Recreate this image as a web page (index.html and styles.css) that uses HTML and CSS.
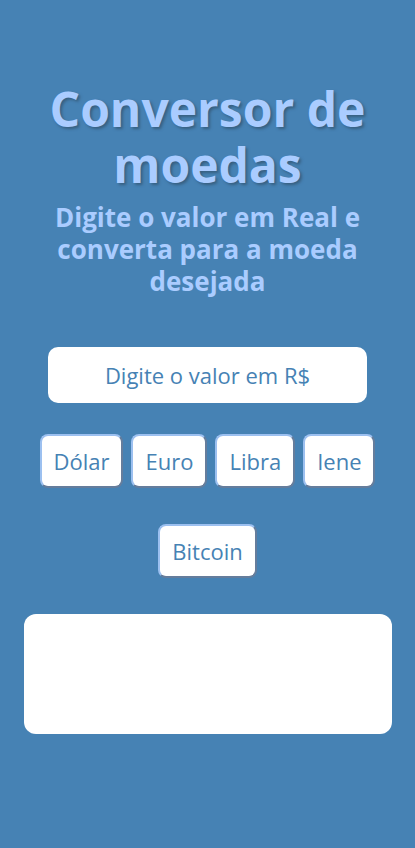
FILE: index.html
```html
<!DOCTYPE html>
<html>
<head>
  <title>Conversor de moedas</title>
  <link rel="stylesheet" href="styles.css">
</head>
<body>

<div class="app">
  <h1 class="title">Conversor de moedas</h1>
  <h2 class="subtitle">Digite o valor em Real e converta para a moeda desejada</h2>

  <input type="text" class="valor" placeholder="Digite o valor em R$" />

  <div class="moedas">
    <button class="moeda">Dólar</button>
    <button class="moeda">Euro</button>
    <button class="moeda">Libra</button>
    <button class="moeda">Iene</button>
    <button class="moeda">Bitcoin</button>
  </div>

  <div class="resultado"></div>
</div>

</body>
</html>
```

FILE: styles.css
```css
body { margin: 0; background: #4682b4; font-family: "Open Sans", Arial, sans-serif; }
.app { display: flex; flex-direction: column; align-items: center; padding: 81px 23px 40px; }
.title {
  margin: 0; width: 350px; text-align: center; font-size: 48px; line-height: 56px;
  color: #aaccff; text-shadow: 2px 2px 3px #375f80;
}
.subtitle {
  margin: 8px 0 0; width: 340px; text-align: center; font-size: 26px; line-height: 32px;
  color: #aaccff;
}
.valor {
  margin-top: 50px; width: 319px; height: 56px; box-sizing: border-box;
  border: none; border-radius: 10px; text-align: center; font-size: 22px;
  font-family: inherit; color: #4682b4; outline: none;
}
.valor::placeholder { color: #4682b4; }
.moedas {
  display: flex; flex-wrap: wrap; justify-content: center; gap: 36px 8px;
  width: 340px; margin-top: 31px;
}
.moeda {
  height: 54px; padding: 0 12px; background: #fff; color: #4682b4;
  font-family: inherit; font-size: 22px; border-radius: 8px;
  border: 2px outset #9cc0f0;
}
.resultado {
  margin-top: 36px; width: 368px; height: 120px; background: #fff; border-radius: 12px;
}
```
